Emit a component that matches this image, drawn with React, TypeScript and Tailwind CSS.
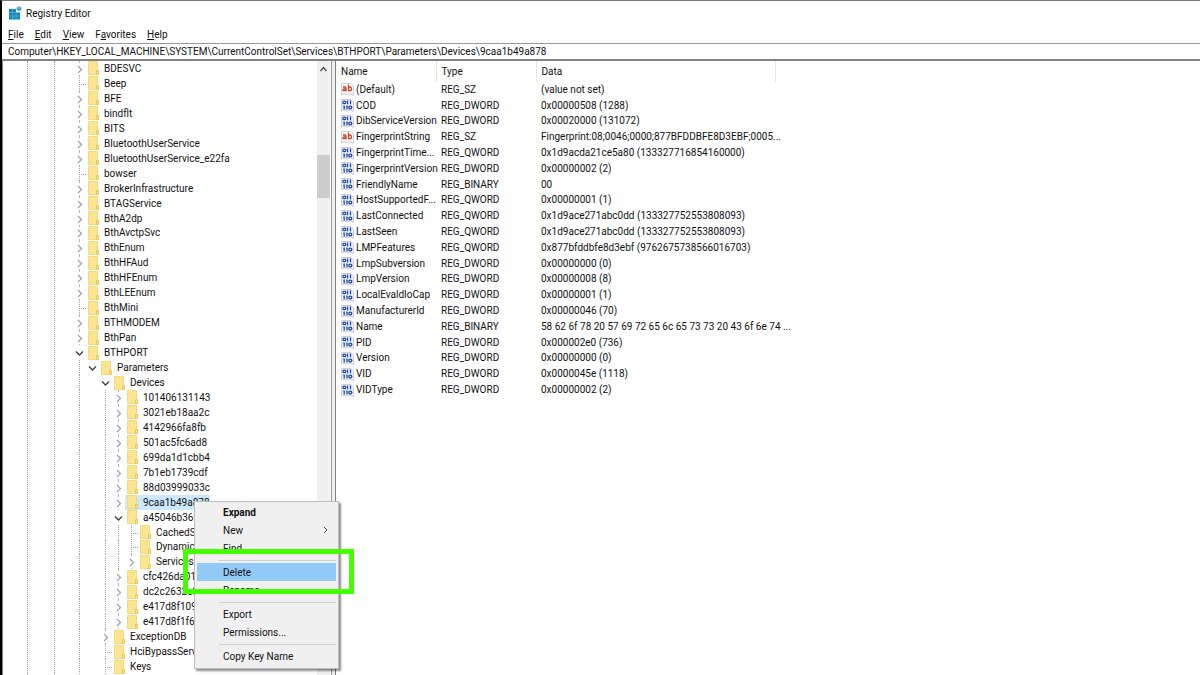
import { useState } from 'react';
import { clsx } from 'clsx';

type TreeState = 'closed' | 'open' | 'leaf';

interface TreeNode {
  name: string;
  depth: number;
  state: TreeState;
}

const MENU_BAR = [
  { before: '', key: 'F', after: 'ile' },
  { before: '', key: 'E', after: 'dit' },
  { before: '', key: 'V', after: 'iew' },
  { before: 'F', key: 'a', after: 'vorites' },
  { before: '', key: 'H', after: 'elp' },
];

const TREE: TreeNode[] = [
  { name: 'BDESVC', depth: 0, state: 'closed' },
  { name: 'Beep', depth: 0, state: 'leaf' },
  { name: 'BFE', depth: 0, state: 'closed' },
  { name: 'bindflt', depth: 0, state: 'closed' },
  { name: 'BITS', depth: 0, state: 'closed' },
  { name: 'BluetoothUserService', depth: 0, state: 'closed' },
  { name: 'BluetoothUserService_e22fa', depth: 0, state: 'closed' },
  { name: 'bowser', depth: 0, state: 'leaf' },
  { name: 'BrokerInfrastructure', depth: 0, state: 'closed' },
  { name: 'BTAGService', depth: 0, state: 'closed' },
  { name: 'BthA2dp', depth: 0, state: 'closed' },
  { name: 'BthAvctpSvc', depth: 0, state: 'closed' },
  { name: 'BthEnum', depth: 0, state: 'closed' },
  { name: 'BthHFAud', depth: 0, state: 'closed' },
  { name: 'BthHFEnum', depth: 0, state: 'closed' },
  { name: 'BthLEEnum', depth: 0, state: 'closed' },
  { name: 'BthMini', depth: 0, state: 'leaf' },
  { name: 'BTHMODEM', depth: 0, state: 'closed' },
  { name: 'BthPan', depth: 0, state: 'closed' },
  { name: 'BTHPORT', depth: 0, state: 'open' },
  { name: 'Parameters', depth: 1, state: 'open' },
  { name: 'Devices', depth: 2, state: 'open' },
  { name: '101406131143', depth: 3, state: 'closed' },
  { name: '3021eb18aa2c', depth: 3, state: 'closed' },
  { name: '4142966fa8fb', depth: 3, state: 'closed' },
  { name: '501ac5fc6ad8', depth: 3, state: 'closed' },
  { name: '699da1d1cbb4', depth: 3, state: 'closed' },
  { name: '7b1eb1739cdf', depth: 3, state: 'closed' },
  { name: '88d03999033c', depth: 3, state: 'closed' },
  { name: '9caa1b49a878', depth: 3, state: 'closed' },
  { name: 'a45046b369', depth: 3, state: 'open' },
  { name: 'CachedS', depth: 4, state: 'leaf' },
  { name: 'Dynamic', depth: 4, state: 'leaf' },
  { name: 'ServicesF', depth: 4, state: 'closed' },
  { name: 'cfc426da016', depth: 3, state: 'closed' },
  { name: 'dc2c2632c3', depth: 3, state: 'closed' },
  { name: 'e417d8f109', depth: 3, state: 'closed' },
  { name: 'e417d8f1f6f', depth: 3, state: 'closed' },
  { name: 'ExceptionDB', depth: 2, state: 'closed' },
  { name: 'HciBypassServ', depth: 2, state: 'leaf' },
  { name: 'Keys', depth: 2, state: 'leaf' },
];

const VALUES = [
  ['(Default)', 'REG_SZ', '(value not set)'],
  ['COD', 'REG_DWORD', '0x00000508 (1288)'],
  ['DibServiceVersion', 'REG_DWORD', '0x00020000 (131072)'],
  ['FingerprintString', 'REG_SZ', 'Fingerprint:08;0046;0000;877BFDDBFE8D3EBF;0005...'],
  ['FingerprintTime...', 'REG_QWORD', '0x1d9acda21ce5a80 (133327716854160000)'],
  ['FingerprintVersion', 'REG_DWORD', '0x00000002 (2)'],
  ['FriendlyName', 'REG_BINARY', '00'],
  ['HostSupportedF...', 'REG_QWORD', '0x00000001 (1)'],
  ['LastConnected', 'REG_QWORD', '0x1d9ace271abc0dd (133327752553808093)'],
  ['LastSeen', 'REG_QWORD', '0x1d9ace271abc0dd (133327752553808093)'],
  ['LMPFeatures', 'REG_QWORD', '0x877bfddbfe8d3ebf (9762675738566016703)'],
  ['LmpSubversion', 'REG_DWORD', '0x00000000 (0)'],
  ['LmpVersion', 'REG_DWORD', '0x00000008 (8)'],
  ['LocalEvaldIoCap', 'REG_DWORD', '0x00000001 (1)'],
  ['ManufacturerId', 'REG_DWORD', '0x00000046 (70)'],
  ['Name', 'REG_BINARY', '58 62 6f 78 20 57 69 72 65 6c 65 73 73 20 43 6f 6e 74 ...'],
  ['PID', 'REG_DWORD', '0x000002e0 (736)'],
  ['Version', 'REG_DWORD', '0x00000000 (0)'],
  ['VID', 'REG_DWORD', '0x0000045e (1118)'],
  ['VIDType', 'REG_DWORD', '0x00000002 (2)'],
];

function RegeditIcon() {
  return (
    <svg width="14" height="14" viewBox="0 0 14 14" aria-hidden="true">
      <path d="M1 3h7v3.500h4V13.500H1z" fill="#1187bd" />
      <path d="M1 6.500h11M1 10h11M4.500 3v10.500M8.200 3v10.500" stroke="#6fc0e0" strokeWidth="0.500" />
      <path d="M11 0.200l2.300 1.200v2.400L11 5 8.800 3.800V1.400z" fill="#3a93b8" />
      <path d="M11 1.300l1.200 0.700-1.200 0.700-1.200-0.700z" fill="#d8f0f9" />
    </svg>
  );
}

function FolderIcon() {
  return (
    <svg width="11" height="14" viewBox="0 0 11 14" className="shrink-0" aria-hidden="true">
      <path d="M0.500 0.500h9v13h-9z" fill="#fde58f" stroke="#f3d983" />
      <path d="M8.500 9.500h2v4h-2z" fill="#fde58f" stroke="#e6c562" />
    </svg>
  );
}

function StringIcon() {
  return (
    <svg width="13" height="13" viewBox="0 0 13 13" className="shrink-0" aria-hidden="true">
      <path d="M0.500 0.500h9.500l2.500 2.500v9.500l-3-1.500-3 1-3-1-3 1z" fill="#f3f5f9" stroke="#c9d0da" />
      <g fill="none" stroke="#cf4526" strokeWidth="1.300">
        <path d="M2 4h2q1 0 1 1v3.200M5 6H3.200Q2 6 2 6.900T3.200 7.700Q4.200 7.700 5 7" />
        <path d="M7.500 1.500v6.700M7.500 5Q8 4 9 4q1.500 0 1.500 1.900T9 7.700Q8 7.700 7.500 6.800" />
      </g>
    </svg>
  );
}

function BinaryIcon() {
  return (
    <svg width="13" height="13" viewBox="0 0 13 13" className="shrink-0" aria-hidden="true">
      <path d="M0.500 0.500h9.500l2.500 2.500v9.500l-3-1.500-3 1-3-1-3 1z" fill="#eaf0fa" stroke="#c9d0da" />
      <g fill="none" stroke="#2347ad" strokeWidth="1.300">
        <ellipse cx="3.300" cy="3.400" rx="1.400" ry="1.300" />
        <path d="M6.500 1.500v3.800M9.500 1.500v3.800M5.800 2.300h0.700M8.800 2.300h0.700" />
        <path d="M3.200 6.500v4M6 6.500v4M2.300 7.300h0.900M5.200 7.300H6" />
        <ellipse cx="9.300" cy="8.500" rx="1.500" ry="1.400" />
      </g>
    </svg>
  );
}

function Expander({ state }: { state: TreeState }) {
  if (state === 'leaf') {
    return (
      <svg width="13" height="15" viewBox="0 0 13 15" className="shrink-0" aria-hidden="true">
        <path d="M6.500 0v15M8 8.500h5" fill="none" stroke="#a0a0a0" strokeDasharray="1 1" />
      </svg>
    );
  }
  return (
    <svg width="13" height="15" viewBox="0 0 13 15" className="shrink-0" aria-hidden="true">
      {state === 'open' ? (
        <path d="M3 6.500l3.500 3.500L10 6.500" fill="none" stroke="#404040" strokeWidth="1.400" />
      ) : (
        <>
          <path d="M6.500 0v2M6.500 14v1" stroke="#b5b5b5" />
          <path d="M5 5l3.500 3.500L5 12" fill="none" stroke="#a0a0a0" strokeWidth="1.200" />
        </>
      )}
    </svg>
  );
}

// Guides run through every ancestor column that still has rows below it.
function guideVisible(level: number, row: number) {
  if (level === 0) return true;
  if (level === 1) return false;
  if (level === 2) return row < 38;
  return row < 34;
}

function Guide({ visible }: { visible: boolean }) {
  return (
    <span className="flex w-[13px] shrink-0 justify-center self-stretch">
      {visible && <span className="border-l border-dotted border-[#a0a0a0]" />}
    </span>
  );
}

function TreePane() {
  const [selected, setSelected] = useState('9caa1b49a878');

  return (
    <div className="flex w-[329px] shrink-0 overflow-hidden border-r border-[#9a9a9a]">
      <div className="flex w-[70px] shrink-0 justify-end gap-[26px] pr-[18px]">
        <span className="border-l border-dotted border-[#a0a0a0]" />
        <span className="border-l border-dotted border-[#a0a0a0]" />
      </div>
      <ul role="tree" aria-label="Registry keys" className="flex h-[613px] min-w-0 flex-1 flex-col">
        {TREE.map((node, row) => (
          <li key={node.name} role="treeitem" aria-selected={selected === node.name} className="flex min-h-0 flex-1 items-center">
            {Array.from({ length: node.depth }, (_, level) => (
              <Guide key={level} visible={guideVisible(level, row)} />
            ))}
            <Expander state={node.state} />
            <button
              onClick={() => setSelected(node.name)}
              className={clsx(
                'flex h-[15px] items-center gap-[5px] whitespace-nowrap pl-[2px] leading-[15px]',
                selected === node.name && 'bg-[#cce8ff]'
              )}
            >
              <FolderIcon />
              {node.name}
            </button>
          </li>
        ))}
      </ul>
      <div className="flex w-[13px] shrink-0 flex-col bg-[#f0f0f0]">
        <svg width="13" height="16" viewBox="0 0 13 16" aria-hidden="true">
          <path d="M3.500 10l3-3.500 3 3.500" fill="none" stroke="#505050" strokeWidth="1.400" />
        </svg>
        <div className="mt-[78px] h-[43px] bg-[#cdcdcd]" />
      </div>
      <div className="w-px bg-white" />
    </div>
  );
}

function ValueTable() {
  return (
    <div className="min-w-0 flex-1 border-l border-[#828282]">
      <table className="h-[337px] w-[439px] table-fixed text-left">
        <colgroup>
          <col className="w-[100px]" />
          <col className="w-[100px]" />
          <col className="w-[239px]" />
        </colgroup>
        <thead>
          <tr className="h-[21px]">
            {['Name', 'Type', 'Data'].map((title) => (
              <th key={title} className="border-r border-[#e5e5e5] p-0 pl-[5px] font-normal">
                {title}
              </th>
            ))}
          </tr>
        </thead>
        <tbody>
          {VALUES.map(([name, type, data]) => (
            <tr key={name} className="leading-[14px]">
              <td className="p-0">
                <span className="flex items-center gap-[2px] whitespace-nowrap pl-[5px]">
                  {type === 'REG_SZ' ? <StringIcon /> : <BinaryIcon />}
                  {name}
                </span>
              </td>
              <td className="p-0 pl-[5px]">{type}</td>
              <td className="whitespace-nowrap p-0 pl-[5px]">{data}</td>
            </tr>
          ))}
        </tbody>
      </table>
    </div>
  );
}

function MenuItem({ label, bold, active, submenu }: { label: string; bold?: boolean; active?: boolean; submenu?: boolean }) {
  return (
    <button
      role="menuitem"
      className={clsx(
        'flex h-[18px] w-full items-center justify-between pl-[26px] pr-2 text-left',
        bold && 'font-bold',
        active && 'bg-[#91c9f7]'
      )}
    >
      {label}
      {submenu && (
        <svg width="5" height="8" viewBox="0 0 5 8" aria-hidden="true">
          <path d="M1 1l3 3-3 3" fill="none" stroke="#404040" />
        </svg>
      )}
    </button>
  );
}

function Separator() {
  return <div role="separator" className="mb-[2px] ml-[22px] mt-[3px] h-px bg-[#cfcfcf]" />;
}

function ContextMenu() {
  return (
    <div
      role="menu"
      className="absolute left-[192px] top-[500px] w-[145px] border border-[#bdbdbd] bg-[#f0f0f0] px-[2px] pb-[3px] pt-px shadow-[2px_2px_2px_rgba(0,0,0,0.45)]"
    >
      <MenuItem label="Expand" bold />
      <MenuItem label="New" submenu />
      <MenuItem label="Find" />
      <Separator />
      <MenuItem label="Delete" active />
      <MenuItem label="Rename" />
      <Separator />
      <MenuItem label="Export" />
      <MenuItem label="Permissions..." />
      <Separator />
      <MenuItem label="Copy Key Name" />
    </div>
  );
}

export default function App() {
  return (
    <div className="relative flex h-screen flex-col overflow-hidden border-l-2 border-t border-l-black border-t-[#777777] bg-white font-[Roboto,'Open_Sans',sans-serif] text-[10px] text-[#111111]">
      <div className="pointer-events-none absolute -top-px left-[525px] w-[445px] border-t border-dashed border-[#333333]" />
      <header className="flex h-6 shrink-0 items-center gap-1 pl-[6px]">
        <RegeditIcon />
        <h1>Registry Editor</h1>
      </header>
      <nav className="flex h-[18px] shrink-0 items-center gap-[11px] pl-[6px]">
        {MENU_BAR.map(({ before, key, after }) => (
          <button key={after}>
            {before}
            <span className="underline">{key}</span>
            {after}
          </button>
        ))}
      </nav>
      <input
        aria-label="Address"
        defaultValue="Computer\HKEY_LOCAL_MACHINE\SYSTEM\CurrentControlSet\Services\BTHPORT\Parameters\Devices\9caa1b49a878"
        className="h-[18px] w-full shrink-0 border-b-2 border-t border-b-[#828282] border-t-[#999999] pl-[6px] outline-none"
      />
      <main className="flex min-h-0 flex-1 border-l border-[#828282]">
        <TreePane />
        <div className="w-[3px] shrink-0 bg-[#f0f0f0]" />
        <ValueTable />
      </main>
      <ContextMenu />
      <div className="pointer-events-none absolute left-[181px] top-[548px] h-[45px] w-[171px] border-[5px] border-[#44ff00]" />
    </div>
  );
}
